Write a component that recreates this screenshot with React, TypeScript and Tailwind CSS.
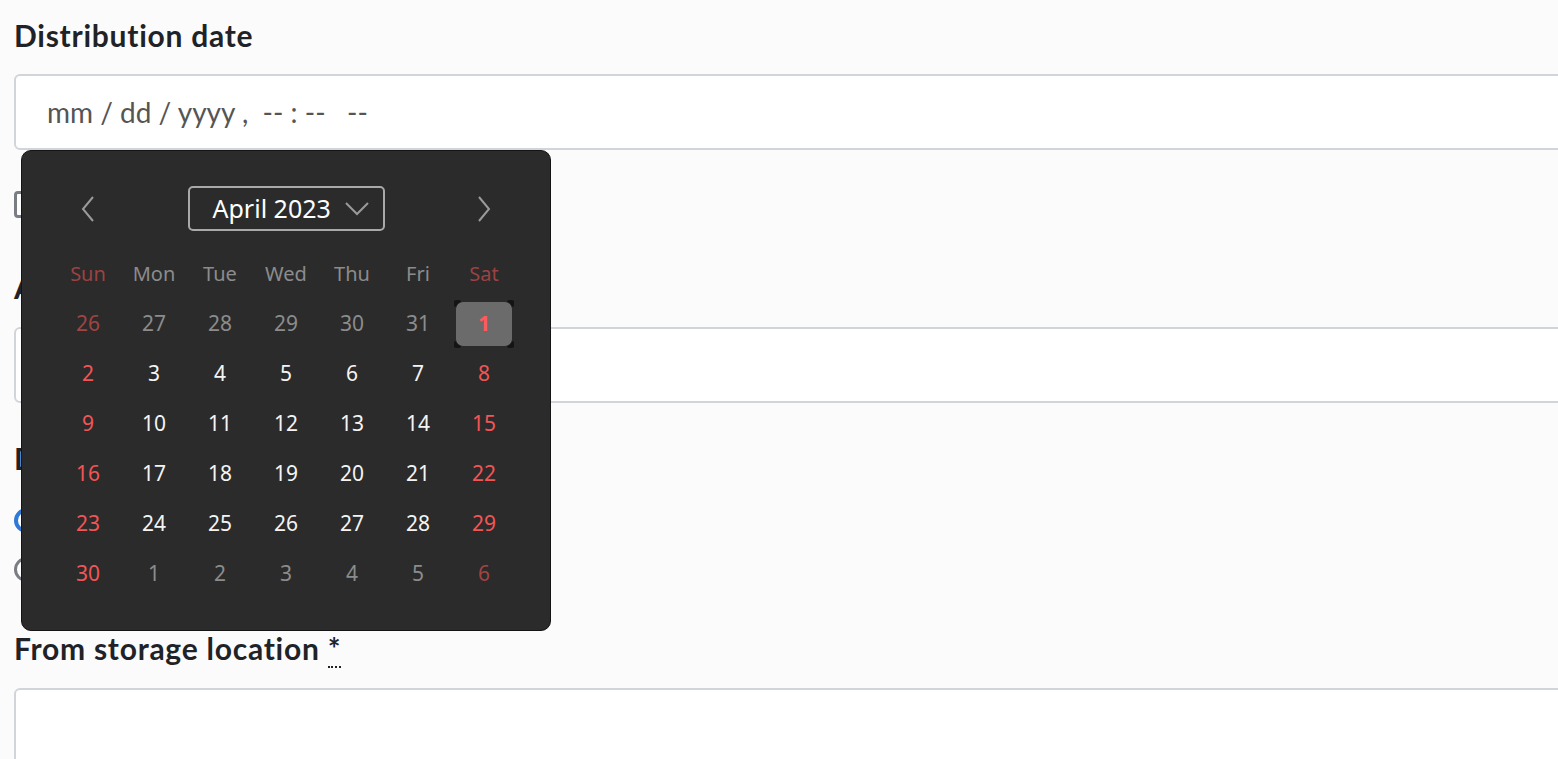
type Day = { n: number; muted?: boolean; weekend?: boolean; selected?: boolean };

const weekdays = ["Sun", "Mon", "Tue", "Wed", "Thu", "Fri", "Sat"];

// April 2023 grid, starting on Sunday March 26
const buildDays = (): Day[] => {
	const days: Day[] = [];
	[26, 27, 28, 29, 30, 31].forEach((n) => days.push({ n, muted: true }));
	for (let n = 1; n <= 30; n++) days.push({ n });
	for (let n = 1; n <= 6; n++) days.push({ n, muted: true });
	return days.map((d, i) => ({
		...d,
		weekend: i % 7 === 0 || i % 7 === 6,
		selected: !d.muted && d.n === 1,
	}));
};

const dayColor = (d: Day) => {
	if (d.weekend) return d.muted ? "text-[#a04444]" : "text-[#f25555]";
	return d.muted ? "text-[#8c8c8c]" : "text-[#f4f4f4]";
};

const Arrow = ({ dir }: { dir: "left" | "right" }) => (
	<svg width="16" height="26" viewBox="0 0 16 26" fill="none" stroke="#9a9a9a" strokeWidth="2">
		{dir === "left" ? <polyline points="13,1 3,13 13,25" /> : <polyline points="3,1 13,13 3,25" />}
	</svg>
);

const DatePicker = () => {
	const days = buildDays();
	return (
		<div className="absolute left-[21px] top-[150px] h-[481px] w-[530px] rounded-[10px] border border-[#141414] bg-[#2b2b2b] font-['Noto_Sans',sans-serif]">
			<div className="mx-[33px] mt-[35px] flex items-center justify-between">
				<div className="flex w-[66px] justify-center">
					<Arrow dir="left" />
				</div>
				<div className="flex h-[45px] w-[197px] items-center justify-between rounded-[5px] border-2 border-[#a9a9a9] pl-[23px] pr-[14px] text-[25px] text-white">
					<span>April 2023</span>
					<svg width="24" height="14" viewBox="0 0 24 14" fill="none" stroke="#9a9a9a" strokeWidth="2">
						<polyline points="1,1 12,12 23,1" />
					</svg>
				</div>
				<div className="flex w-[66px] justify-center">
					<Arrow dir="right" />
				</div>
			</div>

			<div className="mx-[33px] mt-[18px] grid grid-cols-7 text-center">
				{weekdays.map((w, i) => (
					<div
						key={w}
						className={`flex h-[50px] items-center justify-center text-[20px] ${
							i === 0 || i === 6 ? "text-[#9c4242]" : "text-[#8c8c8c]"
						}`}
					>
						{w}
					</div>
				))}
				{days.map((d, i) => (
					<div key={i} className="flex h-[50px] items-center justify-center">
						{d.selected ? (
							<span className="relative flex h-[48px] w-[60px] items-center justify-center">
								<span className="absolute left-0 top-0 h-[7px] w-[7px] rounded-[2px] bg-[#141414]" />
								<span className="absolute right-0 top-0 h-[7px] w-[7px] rounded-[2px] bg-[#141414]" />
								<span className="absolute bottom-0 left-0 h-[7px] w-[7px] rounded-[2px] bg-[#141414]" />
								<span className="absolute bottom-0 right-0 h-[7px] w-[7px] rounded-[2px] bg-[#141414]" />
								<span className="relative flex h-[44px] w-[56px] items-center justify-center rounded-[7px] bg-[#6b6b6b] text-[21px] font-bold text-[#ff5a5a]">
									{d.n}
								</span>
							</span>
						) : (
							<span className={`text-[21px] ${dayColor(d)}`}>{d.n}</span>
						)}
					</div>
				))}
			</div>
		</div>
	);
};

const Label = ({ children }: { children: React.ReactNode }) => (
	<label className="block text-[30px] font-bold leading-[34px] tracking-[0.75px] text-[#1f2328]">
		{children}
	</label>
);

const Field = ({ children, className = "" }: { children?: React.ReactNode; className?: string }) => (
	<div
		className={`flex h-[76px] w-[1600px] items-center rounded-[6px] border-2 border-[#d1d5da] bg-white px-[31px] text-[28px] text-[#555] ${className}`}
	>
		{children}
	</div>
);

export default function App() {
	return (
		<div className="relative h-[759px] overflow-hidden bg-[#fbfbfb] pl-[14px] pt-[18px] font-['Lato',sans-serif]">
			<Label>Distribution date</Label>
			<Field className="mt-[22px]">
				<span className="whitespace-pre">mm / dd / yyyy ,  -- : --   --</span>
			</Field>

			<div className="mt-[36px] flex h-[36px] items-center gap-3">
				<span className="h-[27px] w-[27px] rounded-[4px] border-[3px] border-[#7b7d85] bg-white" />
				<span className="text-[24px] text-[#1f2328]">Draft</span>
			</div>

			<div className="mt-[48px]">
				<Label>Agency *</Label>
			</div>
			<Field className="mt-[23px]" />

			<div className="mt-[38px]">
				<Label>Delivery method</Label>
			</div>
			<div className="mt-[27px] flex h-[36px] items-center gap-3">
				<span className="h-[25px] w-[25px] rounded-full border-[4px] border-[#2f7ad6] bg-white" />
				<span className="text-[24px] text-[#1f2328]">Pick up</span>
			</div>
			<div className="mt-[13px] flex h-[36px] items-center gap-3">
				<span className="h-[25px] w-[25px] rounded-full border-[3px] border-[#7b7d85] bg-white" />
				<span className="text-[24px] text-[#1f2328]">Delivery</span>
			</div>

			<div className="mt-[44px]">
				<Label>
					From storage location{" "}
					<abbr title="required" className="border-b-2 border-dotted border-[#1f2328] no-underline">
						*
					</abbr>
				</Label>
			</div>
			<Field className="mt-[23px] h-[90px]" />

			<DatePicker />
		</div>
	);
}
